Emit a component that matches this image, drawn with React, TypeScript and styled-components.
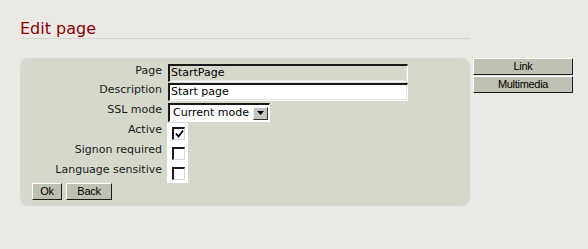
import React from "react";
import styled, { createGlobalStyle } from "styled-components";

const Global = createGlobalStyle`
  html, body { margin: 0; padding: 0; background: #eae9e6; }
  body { font-family: "DejaVu Sans", Verdana, sans-serif; }
`;

const Page = styled.div`
  padding: 20px 0 0 20px;
`;

const Title = styled.h1`
  margin: 0;
  width: 450px;
  height: 18px;
  line-height: 18px;
  font-size: 16px;
  font-weight: normal;
  color: #8b0000;
  border-bottom: 1px solid #d3d4c9;
`;

const Content = styled.div`
  display: flex;
  align-items: flex-start;
  gap: 3px;
  margin-top: 19px;
`;

const Panel = styled.div`
  width: 450px;
  height: 148px;
  box-sizing: border-box;
  background: #d5d9cb;
  border-radius: 8px;
  padding: 6px 0 6px 13px;
`;

const Form = styled.div`
  display: grid;
  grid-template-columns: 129px 1fr;
  grid-template-rows: 19px 20px 20px 20px 20px 20px;
  column-gap: 6px;
`;

const Label = styled.div`
  text-align: right;
  font-size: 11px;
  line-height: 14px;
  color: #1a1a1a;
  white-space: nowrap;
`;

const Field = styled.div`
  display: flex;
  align-items: flex-start;
`;

const TextInput = styled.div<{ $readonly?: boolean }>`
  width: 240px;
  height: 18px;
  box-sizing: border-box;
  background: ${(p) => (p.$readonly ? "#d5d9cb" : "#ffffff")};
  border-style: solid;
  border-width: 2px 1px 1px 2px;
  border-color: #1a1a1a #ffffff #ffffff #1a1a1a;
  box-shadow: inset -1px -1px 0 #e4e4e0;
  font-size: 11px;
  line-height: 14px;
  padding-left: 1px;
  color: #000;
  white-space: nowrap;
  overflow: hidden;
`;

const Select = styled.div`
  width: 102px;
  height: 19px;
  box-sizing: border-box;
  background: #fff;
  border-style: solid;
  border-width: 2px 1px 1px 2px;
  border-color: #1a1a1a #ffffff #ffffff #1a1a1a;
  display: flex;
  align-items: center;
  justify-content: space-between;
  padding: 0 1px 0 3px;
  font-size: 11px;
  color: #000;
`;

const SelectText = styled.span`
  line-height: 14px;
  white-space: nowrap;
`;

const Arrow = styled.div`
  width: 15px;
  height: 13px;
  box-sizing: border-box;
  background: #c4c4c0;
  border-style: solid;
  border-width: 1px;
  border-color: #f0f0f0 #303030 #303030 #f0f0f0;
  display: flex;
  align-items: center;
  justify-content: center;
`;

const CheckCell = styled.div`
  width: 21px;
  height: 20px;
  margin-left: -1px;
  background: #ffffff;
  box-sizing: border-box;
  padding: 4px 0 0 5px;
`;

const CheckBox = styled.div`
  width: 13px;
  height: 13px;
  box-sizing: border-box;
  background: #fff;
  border-style: solid;
  border-width: 2px 1px 1px 2px;
  border-color: #1a1a1a #d8d8d8 #d8d8d8 #1a1a1a;
  display: flex;
  align-items: center;
  justify-content: center;
`;

const ButtonRow = styled.div`
  grid-column: 1 / span 2;
  display: flex;
  gap: 4px;
  margin-left: -1px;
`;

const Button = styled.div<{ $width: number }>`
  width: ${(p) => p.$width}px;
  height: 17px;
  box-sizing: border-box;
  background: #bec0b1;
  border-style: solid;
  border-width: 1px;
  border-color: #ffffff #1a1a1a #1a1a1a #ffffff;
  font-family: "Liberation Sans", Arial, sans-serif;
  font-size: 11px;
  letter-spacing: -0.3px;
  line-height: 15px;
  text-align: center;
  color: #000;
`;

const Side = styled.div`
  display: flex;
  flex-direction: column;
  gap: 1px;
`;

const Check = () => (
  <svg width="9" height="8" viewBox="0 0 9 8">
    <path d="M1 3.5 L3.5 6.5 L8 0.5" fill="none" stroke="#000" strokeWidth="1.8" />
  </svg>
);

const DownArrow = () => (
  <svg width="7" height="4" viewBox="0 0 7 4">
    <path d="M0 0 H7 L3.5 4 Z" fill="#000" />
  </svg>
);

export default function App() {
  return (
    <>
      <Global />
      <Page>
        <Title>Edit page</Title>
        <Content>
          <Panel>
            <Form>
              <Label>Page</Label>
              <Field>
                <TextInput $readonly>StartPage</TextInput>
              </Field>
              <Label>Description</Label>
              <Field>
                <TextInput>Start page</TextInput>
              </Field>
              <Label>SSL mode</Label>
              <Field>
                <Select>
                  <SelectText>Current mode</SelectText>
                  <Arrow>
                    <DownArrow />
                  </Arrow>
                </Select>
              </Field>
              <Label>Active</Label>
              <Field>
                <CheckCell>
                  <CheckBox>
                    <Check />
                  </CheckBox>
                </CheckCell>
              </Field>
              <Label>Signon required</Label>
              <Field>
                <CheckCell>
                  <CheckBox />
                </CheckCell>
              </Field>
              <Label>Language sensitive</Label>
              <Field>
                <CheckCell>
                  <CheckBox />
                </CheckCell>
              </Field>
              <ButtonRow>
                <Button $width={30}>Ok</Button>
                <Button $width={46}>Back</Button>
              </ButtonRow>
            </Form>
          </Panel>
          <Side>
            <Button $width={100}>Link</Button>
            <Button $width={100}>Multimedia</Button>
          </Side>
        </Content>
      </Page>
    </>
  );
}
